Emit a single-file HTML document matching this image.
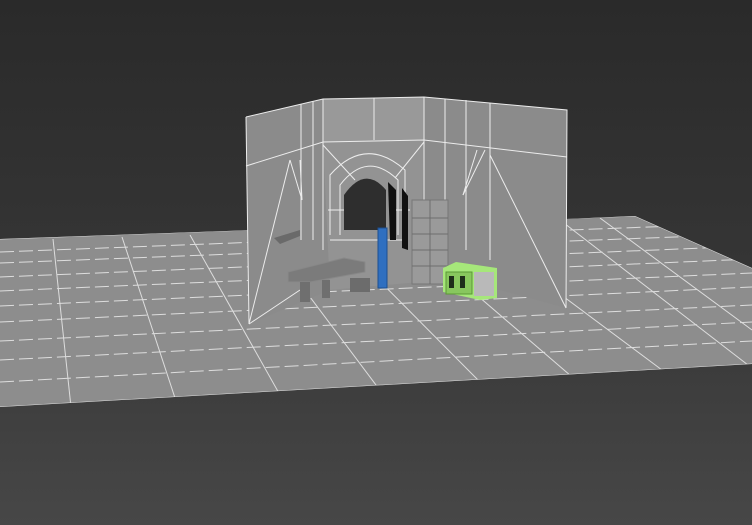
<!DOCTYPE html>
<html><head><meta charset="utf-8"><style>
html,body{margin:0;padding:0;width:752px;height:525px;overflow:hidden;background:linear-gradient(#2a2a2a,#353535 50%,#474747);}
svg{display:block}
</style></head><body>
<svg width="752" height="525" viewBox="0 0 752 525" xmlns="http://www.w3.org/2000/svg">
<defs><clipPath id="fl"><polygon points="0,239 566,219 635,216 752,268 752,364 0,407"/></clipPath></defs>
<!-- floor -->
<polygon points="0,239 566,219 635,216 752,268 752,364 0,407" fill="#8d8d8d"/>
<g stroke="#e6e6e6" stroke-width="1" fill="none" opacity="0.9" clip-path="url(#fl)">
<g stroke-dasharray="14 5">
<line x1="0" y1="252" x2="752" y2="223"/>
<line x1="0" y1="263" x2="752" y2="234"/>
<line x1="0" y1="277" x2="752" y2="246"/>
<line x1="0" y1="291" x2="752" y2="259"/>
<line x1="0" y1="306" x2="752" y2="273"/>
<line x1="0" y1="322" x2="752" y2="287"/>
<line x1="0" y1="341" x2="752" y2="305"/>
<line x1="0" y1="360" x2="752" y2="322"/>
<line x1="0" y1="382" x2="752" y2="341"/>
</g>
<line x1="53" y1="239" x2="71" y2="407"/>
<line x1="122" y1="237" x2="176" y2="401"/>
<line x1="190" y1="235" x2="280" y2="395"/>
<line x1="262" y1="233" x2="379" y2="389"/>
<line x1="330" y1="231" x2="480" y2="382"/>
<line x1="400" y1="229" x2="571" y2="376"/>
<line x1="470" y1="227" x2="662" y2="370"/>
<line x1="560" y1="220" x2="748" y2="365"/>
<line x1="600" y1="218" x2="752" y2="330"/>
<line x1="0" y1="239" x2="635" y2="216"/>
<line x1="635" y1="216" x2="752" y2="268"/>
<line x1="0" y1="407" x2="752" y2="364"/>
</g>
<!-- walls -->
<polygon points="246,117 323,99 424,97 567,110 566,308 500,290 420,282 330,290 249,324" fill="#8b8b8b"/>
<polygon points="323,99 424,97 424,140 323,142" fill="#999"/>
<polygon points="323,142 424,140 420,282 330,290" fill="#939393"/>
<g stroke="#ececec" stroke-width="1" fill="none">
<polyline points="246,117 323,99 424,97 567,110 566,308"/>
<line x1="246" y1="117" x2="249" y2="324"/>
<polyline points="246,166 323,142 424,140 567,157"/>
<line x1="323" y1="99" x2="323" y2="250"/>
<line x1="424" y1="97" x2="424" y2="240"/>
<line x1="301" y1="104" x2="301" y2="240"/>
<line x1="313" y1="101" x2="313" y2="240"/>
<line x1="445" y1="99" x2="445" y2="250"/>
<line x1="466" y1="100" x2="466" y2="250"/>
<line x1="490" y1="103" x2="490" y2="260"/>
<line x1="374" y1="98" x2="374" y2="140"/>
<line x1="249" y1="324" x2="290" y2="160"/>
<line x1="249" y1="324" x2="300" y2="290"/>
<line x1="566" y1="308" x2="490" y2="155"/>
<line x1="290" y1="160" x2="302" y2="200"/>
<line x1="300" y1="160" x2="302" y2="200"/>
<line x1="477" y1="150" x2="463" y2="195"/>
<line x1="485" y1="150" x2="463" y2="195"/>
<line x1="323" y1="145" x2="355" y2="180"/>
<line x1="424" y1="142" x2="395" y2="178"/>
<path d="M330,235 L330,175 Q365,135 405,170 L405,235"/>
<path d="M340,235 L340,185 Q367,150 398,180 L398,235"/>
<path d="M330,240 L405,240 M328,210 L345,210 M392,210 L410,210"/>
</g>
<!-- arch opening -->
<path d="M344,230 L344,195 Q365,165 386,190 L386,230 Z" fill="#2e2e2e"/>
<path d="M388,182 L396,190 L396,240 L390,240 Z" fill="#111"/>
<path d="M402,188 L408,196 L408,250 L402,248 Z" fill="#111"/>
<!-- shelves -->
<polygon points="274,238 300,230 300,236 280,244" fill="#6a6a6a"/>
<!-- bookshelf -->
<rect x="412" y="200" width="36" height="84" fill="#9a9a9a" stroke="#777"/>
<g stroke="#6d6d6d"><line x1="412" y1="218" x2="448" y2="218"/><line x1="412" y1="234" x2="448" y2="234"/><line x1="412" y1="250" x2="448" y2="250"/><line x1="412" y1="266" x2="448" y2="266"/><line x1="430" y1="200" x2="430" y2="284"/></g>
<!-- table -->
<polygon points="288,272 344,258 365,262 365,272 310,282 288,282" fill="#7b7b7b" stroke="#888"/>
<rect x="300" y="282" width="10" height="20" fill="#6f6f6f"/>
<rect x="322" y="280" width="8" height="18" fill="#6f6f6f"/>
<rect x="350" y="278" width="20" height="14" fill="#6c6c6c"/>
<!-- blue pillar -->
<rect x="378" y="228" width="9" height="60" fill="#2f6fc0" stroke="#1c4f90"/>
<!-- chest -->
<polygon points="443,268 456,262 497,268 497,298 480,300 443,292" fill="#a6e77a"/>
<rect x="474" y="272" width="20" height="24" fill="#b9b9b9"/>
<rect x="446" y="272" width="26" height="22" fill="#88c75e" stroke="#5b9a35"/>
<path d="M449,276 h5 v12 h-5z M460,276 h5 v12 h-5z" fill="#1e2e1a"/>
</svg>
</body></html>
